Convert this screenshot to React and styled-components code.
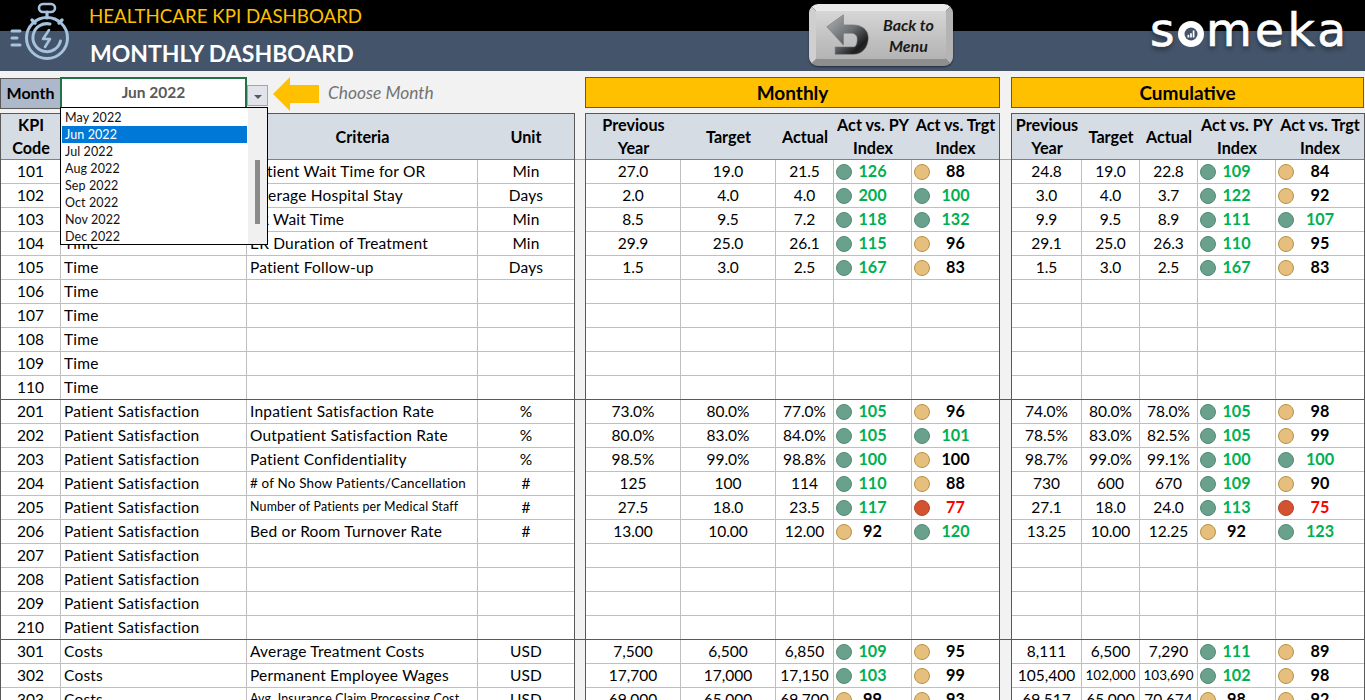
import React from 'react';
import styled, { createGlobalStyle } from 'styled-components';

const MONTHLY_COLS = '95px 95px 58px 78px 87px';
const CUMULATIVE_COLS = '70px 58px 58px 78px 88px';
const INFO_COLS = '60px 186px 231px 96px';

const months = ['May 2022', 'Jun 2022', 'Jul 2022', 'Aug 2022', 'Sep 2022', 'Oct 2022', 'Nov 2022', 'Dec 2022'];

// [code, category, criteria, unit, monthly, cumulative]
// monthly / cumulative: [prev, target, actual, pyDot, pyIndex, trgtDot, trgtIndex]
const rows = [
  [101, 'Time', 'Patient Wait Time for OR', 'Min', ['27.0', '19.0', '21.5', 'g', 126, 'a', 88], ['24.8', '19.0', '22.8', 'g', 109, 'a', 84]],
  [102, 'Time', 'Average Hospital Stay', 'Days', ['2.0', '4.0', '4.0', 'g', 200, 'g', 100], ['3.0', '4.0', '3.7', 'g', 122, 'a', 92]],
  [103, 'Time', 'ER Wait Time', 'Min', ['8.5', '9.5', '7.2', 'g', 118, 'g', 132], ['9.9', '9.5', '8.9', 'g', 111, 'g', 107]],
  [104, 'Time', 'ER Duration of Treatment', 'Min', ['29.9', '25.0', '26.1', 'g', 115, 'a', 96], ['29.1', '25.0', '26.3', 'g', 110, 'a', 95]],
  [105, 'Time', 'Patient Follow-up', 'Days', ['1.5', '3.0', '2.5', 'g', 167, 'a', 83], ['1.5', '3.0', '2.5', 'g', 167, 'a', 83]],
  [106, 'Time'],
  [107, 'Time'],
  [108, 'Time'],
  [109, 'Time'],
  [110, 'Time'],
  [201, 'Patient Satisfaction', 'Inpatient Satisfaction Rate', '%', ['73.0%', '80.0%', '77.0%', 'g', 105, 'a', 96], ['74.0%', '80.0%', '78.0%', 'g', 105, 'a', 98]],
  [202, 'Patient Satisfaction', 'Outpatient Satisfaction Rate', '%', ['80.0%', '83.0%', '84.0%', 'g', 105, 'g', 101], ['78.5%', '83.0%', '82.5%', 'g', 105, 'a', 99]],
  [203, 'Patient Satisfaction', 'Patient Confidentiality', '%', ['98.5%', '99.0%', '98.8%', 'g', 100, 'a', 100], ['98.7%', '99.0%', '99.1%', 'g', 100, 'g', 100]],
  [204, 'Patient Satisfaction', '# of No Show Patients/Cancellation', '#', ['125', '100', '114', 'g', 110, 'a', 88], ['730', '600', '670', 'g', 109, 'a', 90]],
  [205, 'Patient Satisfaction', 'Number of Patients per Medical Staff', '#', ['27.5', '18.0', '23.5', 'g', 117, 'r', 77], ['27.1', '18.0', '24.0', 'g', 113, 'r', 75]],
  [206, 'Patient Satisfaction', 'Bed or Room Turnover Rate', '#', ['13.00', '10.00', '12.00', 'a', 92, 'g', 120], ['13.25', '10.00', '12.25', 'a', 92, 'g', 123]],
  [207, 'Patient Satisfaction'],
  [208, 'Patient Satisfaction'],
  [209, 'Patient Satisfaction'],
  [210, 'Patient Satisfaction'],
  [301, 'Costs', 'Average Treatment Costs', 'USD', ['7,500', '6,500', '6,850', 'g', 109, 'a', 95], ['8,111', '6,500', '7,290', 'g', 111, 'a', 89]],
  [302, 'Costs', 'Permanent Employee Wages', 'USD', ['17,700', '17,000', '17,150', 'g', 103, 'a', 99], ['105,400', '102,000', '103,690', 'g', 102, 'a', 98]],
  [303, 'Costs', 'Avg. Insurance Claim Processing Cost', 'USD', ['69,000', '65,000', '69,700', 'a', 99, 'a', 93], ['69,517', '65,000', '70,674', 'a', 98, 'a', 92]],
];

const isGroupEnd = (code) => code === 110 || code === 210;
const criteriaSize = (text) => {
  if (!text) return 15.5;
  if (text.length > 34) return 12.4;
  if (text.length > 30) return 13.4;
  return 15.5;
};

const StopwatchIcon = () => (
  <WatchSvg viewBox="0 0 90 75" fill="none" stroke="#A5C2DE" strokeLinecap="round">
    <rect x="39" y="4" width="16" height="8" rx="4" strokeWidth="2.6" />
    <path d="M47 12v6" strokeWidth="3.2" />
    <path d="M32 20l3 3M62 20l-3 3" strokeWidth="3.4" />
    <circle cx="47" cy="38" r="20.500" strokeWidth="3" />
    <path d="M60.500 41a14 14 0 1 1-10.500-17" strokeWidth="3" />
    <path d="M49 30l-6 9h7l-5 8" strokeWidth="2.600" strokeLinejoin="round" />
    <path d="M12 31h8M12 38h5M12 45h8" strokeWidth="3" />
  </WatchSvg>
);

const BackArrow = () => (
  <BackSvg viewBox="25 10 50 48" aria-hidden="true">
    <defs>
      <linearGradient id="backFill" x1="0" y1="0" x2="1" y2="1">
        <stop offset="0" stopColor="#B0B4B8" />
        <stop offset="0.5" stopColor="#6A6D70" />
        <stop offset="0.8" stopColor="#1D1D1D" />
        <stop offset="1" stopColor="#3A3A3A" />
      </linearGradient>
    </defs>
    <path
      d="M27 25L45 12v11h10c10 0 17 5 17 14 0 11-7 18-16 18H36v-8h20c3 0 4-4 4-9 0-4-3-6-7-6h-8v13z"
      fill="url(#backFill)"
      stroke="#6E7174"
      strokeWidth="0.6"
    />
  </BackSvg>
);

const LogoDot = () => (
  <LogoO viewBox="0 0 30 30" aria-hidden="true">
    <circle cx="15" cy="15" r="15" fill="#fff" />
    <circle cx="15" cy="15" r="7.500" fill="#44546A" />
    <path d="M11 19v-3h2v3zM14 19v-5h2v5zM17 19v-8h2v8z" fill="#fff" />
  </LogoO>
);

const IndexCell = ({ dot, value, end }) => (
  <Index $end={end}>
    {dot && <Dot $status={dot} />}
    {dot && <IndexValue $status={dot}>{value}</IndexValue>}
  </Index>
);

const NumberRow = ({ columns, code, values, compact }) => {
  const [prev, target, actual, pyDot, pyValue, trgtDot, trgtValue] = values || [];
  return (
    <Row $columns={columns} $groupEnd={isGroupEnd(code)}>
      <Cell $align="center">{prev}</Cell>
      <Cell $align="center" $size={compact && target && target.length > 6 ? 13.5 : 15.5}>{target}</Cell>
      <Cell $align="center" $size={compact && actual && actual.length > 6 ? 13.5 : 15.5}>{actual}</Cell>
      <IndexCell dot={pyDot} value={pyValue} />
      <IndexCell dot={trgtDot} value={trgtValue} end />
    </Row>
  );
};

const NumberHead = ({ columns }) => (
  <HeadRow $columns={columns}>
    <HeadCell>Previous<br />Year</HeadCell>
    <HeadCell>Target</HeadCell>
    <HeadCell>Actual</HeadCell>
    <HeadCell>Act vs. PY<br />Index</HeadCell>
    <HeadCell>Act vs. Trgt<br />Index</HeadCell>
  </HeadRow>
);

const App = () => (
  <Page>
    <GlobalStyle />
    <Banner>
      <BlackStrip>
        <ProductName>HEALTHCARE KPI DASHBOARD</ProductName>
      </BlackStrip>
      <SlateStrip>
        <PageName>MONTHLY DASHBOARD</PageName>
      </SlateStrip>
      <StopwatchIcon />
      <BackButton>
        <BackArrow />
        <BackLabel>Back to<br />Menu</BackLabel>
      </BackButton>
      <Logo>s<LogoDot />meka</Logo>
    </Banner>

    <Toolbar>
      <MonthPicker>
        <MonthLabel>Month</MonthLabel>
        <MonthSelect>Jun 2022</MonthSelect>
        <DropButton><DropCaret /></DropButton>
        <ArrowSvg viewBox="0 0 46 34" aria-hidden="true">
          <path d="M0 17L17 0v8h29v18H17v8z" fill="#FFC000" />
        </ArrowSvg>
        <Hint>Choose Month</Hint>
        <Dropdown>
          <MonthList>
            {months.map((m) => (
              <MonthItem key={m} $active={m === 'Jun 2022'}>{m}</MonthItem>
            ))}
          </MonthList>
          <ScrollTrack><ScrollThumb /></ScrollTrack>
        </Dropdown>
      </MonthPicker>
      <Band $width={415} $gap={10}>Monthly</Band>
      <Band $width={353} $gap={11}>Cumulative</Band>
    </Toolbar>

    <Board>
      <Table>
        <HeadRow $columns={INFO_COLS}>
          <HeadCell>KPI<br />Code</HeadCell>
          <HeadCell />
          <HeadCell>Criteria</HeadCell>
          <HeadCell>Unit</HeadCell>
        </HeadRow>
        {rows.map(([code, category, criteria, unit]) => (
          <Row key={code} $columns={INFO_COLS} $groupEnd={isGroupEnd(code)}>
            <Cell $align="center">{code}</Cell>
            <Cell $text>{category}</Cell>
            <Cell $text $size={criteriaSize(criteria)}>{criteria}</Cell>
            <Cell $align="center" $text>{unit}</Cell>
          </Row>
        ))}
      </Table>

      <Gutter $width={10}><GutterHead /><GutterBlock /><GutterBlock /></Gutter>

      <Table>
        <NumberHead columns={MONTHLY_COLS} />
        {rows.map(([code, , , , monthly]) => (
          <NumberRow key={code} columns={MONTHLY_COLS} code={code} values={monthly} />
        ))}
      </Table>

      <Gutter $width={11}><GutterHead /><GutterBlock /><GutterBlock /></Gutter>

      <Table>
        <NumberHead columns={CUMULATIVE_COLS} />
        {rows.map(([code, , , , , cumulative]) => (
          <NumberRow key={code} columns={CUMULATIVE_COLS} code={code} values={cumulative} compact />
        ))}
      </Table>
    </Board>
  </Page>
);

const GlobalStyle = createGlobalStyle`
  * { box-sizing: border-box; }
  html, body { margin: 0; height: 700px; overflow: hidden; background: #F2F2F2; }
  body { font-family: Lato, "Open Sans", sans-serif; color: #000; }
`;

const Page = styled.div`
  width: 1365px;
  height: 700px;
  overflow: hidden;
`;

const Banner = styled.header`
  position: relative;
  height: 71px;
`;

const BlackStrip = styled.div`
  height: 31px;
  background: #000;
  padding-left: 89px;
  display: flex;
  align-items: center;
`;

const SlateStrip = styled.div`
  height: 40px;
  background: #44546A;
  padding-left: 90px;
  display: flex;
  align-items: center;
`;

const ProductName = styled.div`
  color: #FFC000;
  font-size: 18.7px;
`;

const PageName = styled.div`
  color: #fff;
  font-size: 23px;
  font-weight: 700;
  margin-top: 3px;
`;

const WatchSvg = styled.svg`
  position: absolute;
  left: 0;
  top: 0;
  width: 90px;
  height: 75px;
`;

const BackButton = styled.div`
  position: absolute;
  left: 809px;
  top: 4px;
  width: 144px;
  height: 62px;
  display: flex;
  align-items: center;
  gap: 12px;
  padding-left: 9px;
  border-radius: 9px;
  border-style: solid;
  border-width: 7px;
  border-color: #E9E9E9 #B4B4B4 #8E8E8E #CFCFCF;
  background: linear-gradient(180deg, #D6D6D6 0%, #C2C2C2 55%, #B4B4B4 100%);
  box-shadow: 0 1px 2px rgba(0, 0, 0, 0.5);
`;

const BackSvg = styled.svg`
  width: 46px;
  height: 46px;
  flex: none;
`;

const BackLabel = styled.div`
  font-size: 16px;
  font-weight: 700;
  font-style: italic;
  line-height: 21px;
  text-align: center;
  color: #1A1A1A;
  white-space: nowrap;
`;

const Logo = styled.div`
  position: absolute;
  left: 1150px;
  top: 0;
  display: flex;
  align-items: baseline;
  color: #fff;
  font-family: "DejaVu Sans", sans-serif;
  font-size: 47px;
  line-height: 60px;
  letter-spacing: 3.4px;
  -webkit-text-stroke: 0.7px #fff;
  text-shadow: 0 3px 5px rgba(0, 0, 0, 0.45);
`;

const LogoO = styled.svg`
  width: 26px;
  height: 26px;
  margin: 7px 2px 0 0;
  align-self: center;
`;

const Toolbar = styled.div`
  height: 42px;
  padding-top: 6px;
  display: flex;
`;

const MonthPicker = styled.div`
  position: relative;
  width: 575px;
  flex: none;
  display: flex;
  align-items: flex-start;
`;

const MonthLabel = styled.div`
  width: 61px;
  height: 31px;
  margin-top: 1px;
  padding-bottom: 2px;
  background: #ADB9CA;
  border: 1px solid #595959;
  font-size: 16px;
  font-weight: 700;
  display: flex;
  align-items: center;
  justify-content: center;
`;

const MonthSelect = styled.div`
  width: 187px;
  height: 32px;
  margin-left: -1px;
  padding-bottom: 2px;
  background: #fff;
  border: 2px solid #217346;
  color: #595959;
  font-size: 15.5px;
  font-weight: 700;
  display: flex;
  align-items: center;
  justify-content: center;
`;

const DropButton = styled.div`
  width: 21px;
  height: 21px;
  margin-top: 8px;
  background: #E1E4EB;
  border: 1px solid #A6A6A6;
  display: flex;
  align-items: center;
  justify-content: center;
`;

const DropCaret = styled.span`
  margin-top: 3px;
  border-left: 4px solid transparent;
  border-right: 4px solid transparent;
  border-top: 4px solid #595959;
`;

const ArrowSvg = styled.svg`
  width: 46px;
  height: 34px;
  margin-left: 5px;
`;

const Hint = styled.div`
  margin-left: 9px;
  margin-top: 5px;
  color: #737373;
  font-size: 17.4px;
  font-style: italic;
`;

const Dropdown = styled.div`
  position: absolute;
  z-index: 5;
  left: 60px;
  top: 30px;
  width: 208px;
  height: 138px;
  display: flex;
  background: #fff;
  border: 1px solid #000;
`;

const MonthList = styled.div`
  width: 187px;
  padding: 1px 1px 0;
  overflow: hidden;
`;

const MonthItem = styled.div`
  height: 17px;
  line-height: 17px;
  padding-left: 3px;
  font-size: 12.5px;
  letter-spacing: 0.1px;
  background: ${(props) => (props.$active ? '#0078D7' : 'transparent')};
  color: ${(props) => (props.$active ? '#fff' : '#111')};
`;

const ScrollTrack = styled.div`
  flex: 1;
  background: #F0F0F0;
  display: flex;
  justify-content: center;
  padding-top: 52px;
`;

const ScrollThumb = styled.div`
  width: 5px;
  height: 64px;
  background: #8A8A8A;
`;

const Band = styled.div`
  width: ${(props) => props.$width}px;
  margin-left: ${(props) => props.$gap}px;
  height: 31px;
  background: #FFC000;
  border: 1px solid #595959;
  font-size: 19px;
  font-weight: 700;
  display: flex;
  align-items: center;
  justify-content: center;
`;

const Board = styled.main`
  display: flex;
  align-items: flex-start;
`;

const Gutter = styled.div`
  width: ${(props) => props.$width}px;
  flex: none;
`;

const GutterHead = styled.div`
  height: 47px;
  border-bottom: 1px solid #A6A6A6;
`;

const GutterBlock = styled.div`
  height: 240px;
  border-bottom: 1px solid #595959;
`;

const Table = styled.section`
  border-left: 1px solid #595959;
  border-right: 1px solid #595959;
  border-top: 1px solid #595959;
  flex: none;
`;

const HeadRow = styled.div`
  display: grid;
  grid-template-columns: ${(props) => props.$columns};
  grid-template-rows: 45px;
  height: 46px;
  background: #D6DCE4;
  border-bottom: 1px solid #808080;
`;

const HeadCell = styled.div`
  display: flex;
  align-items: center;
  justify-content: center;
  text-align: center;
  padding-bottom: 1px;
  font-size: 16.2px;
  font-weight: 700;
  line-height: 23px;
  white-space: nowrap;
`;

const Row = styled.div`
  display: grid;
  grid-template-columns: ${(props) => props.$columns};
  height: 24px;
  background: #fff;
  border-bottom: 1px solid ${(props) => (props.$groupEnd ? '#595959' : '#BFBFBF')};
`;

const Cell = styled.div`
  display: flex;
  align-items: center;
  justify-content: ${(props) => props.$align || 'flex-start'};
  padding: 0 3px 2px;
  font-size: ${(props) => props.$size || 15.5}px;
  letter-spacing: ${(props) => (props.$text ? '0.2px' : '0')};
  border-right: 1px solid #BFBFBF;
  white-space: nowrap;
  overflow: hidden;
  &:last-child { border-right: 0; }
`;

const Index = styled.div`
  display: grid;
  grid-template-columns: 19px 1fr 19px;
  align-items: center;
  border-right: ${(props) => (props.$end ? '0' : '1px solid #BFBFBF')};
`;

const dotColors = {
  g: ['#6AA18C', '#4F8A75'],
  a: ['#E6BF7F', '#B8923F'],
  r: ['#D35230', '#B5452A'],
};

const Dot = styled.span`
  width: 16px;
  height: 16px;
  margin-left: 2px;
  border-radius: 50%;
  background: ${(props) => dotColors[props.$status][0]};
  border: 1px solid ${(props) => dotColors[props.$status][1]};
`;

const valueColors = { g: '#00B050', a: '#000', r: '#FF0000' };

const IndexValue = styled.span`
  text-align: center;
  margin-bottom: 2px;
  font-size: 16.2px;
  font-weight: 700;
  color: ${(props) => valueColors[props.$status]};
`;

export default App;
